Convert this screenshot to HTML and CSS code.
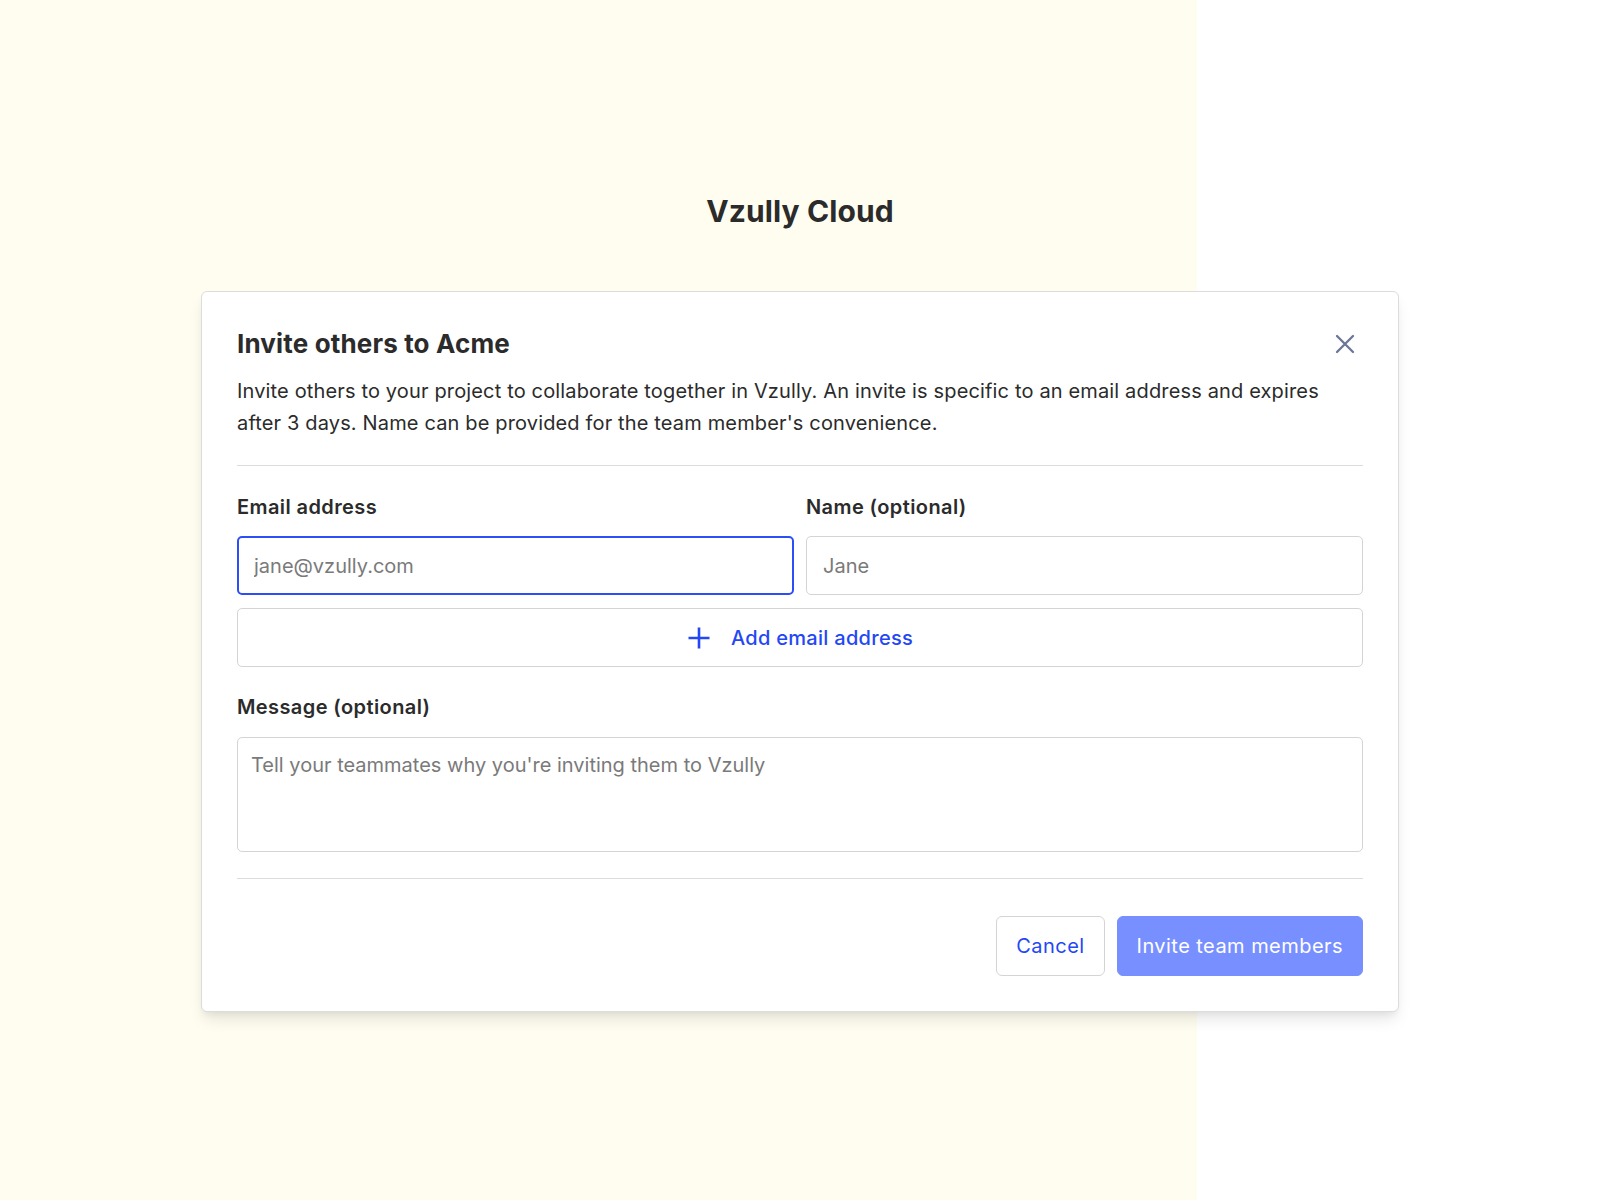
FILE: index.html
```html
<!DOCTYPE html>
<html>

<head>
    <meta name="viewport" content="width=device-width, initial-scale=1">
    <link rel="stylesheet" href="styles.css">
</head>

<body>

    <h1 class="brand">Vzully Cloud</h1>

    <div class="modal">
        <div class="modal-head">
            <h2 class="modal-title">Invite others to Acme</h2>
            <button class="close" type="button" aria-label="Close">
                <svg width="20" height="20" viewBox="0 0 20 20">
                    <path d="M2 2 L18 18 M18 2 L2 18" stroke="currentColor" stroke-width="2.3" stroke-linecap="round" fill="none" />
                </svg>
            </button>
        </div>
        <p class="modal-text">Invite others to your project to collaborate together in Vzully. An invite is specific to an email address and expires after 3 days. Name can be provided for the team member's convenience.</p>

        <hr class="rule">

        <div class="fields">
            <div class="field">
                <label class="label" for="email">Email address</label>
                <input class="input focused" id="email" type="text" placeholder="jane@vzully.com">
            </div>
            <div class="field">
                <label class="label" for="name">Name (optional)</label>
                <input class="input" id="name" type="text" placeholder="Jane">
            </div>
        </div>

        <button class="add-row" type="button">
            <svg width="24" height="24" viewBox="0 0 24 24">
                <path d="M12 1.5 V22.5 M1.5 12 H22.5" stroke="currentColor" stroke-width="2.6" fill="none" />
            </svg>
            <span>Add email address</span>
        </button>

        <label class="label label-msg" for="msg">Message (optional)</label>
        <textarea class="textarea" id="msg" placeholder="Tell your teammates why you're inviting them to Vzully"></textarea>

        <hr class="rule rule-bottom">

        <div class="actions">
            <button class="btn btn-cancel" type="button">Cancel</button>
            <button class="btn btn-invite" type="button">Invite team members</button>
        </div>
    </div>

</body>

</html>
```

FILE: styles.css
```css
body {
    margin: 0;
    padding-top: 191px;
    min-height: 1200px;
    box-sizing: border-box;
    font-family: Inter, "Noto Sans", sans-serif;
    color: #2b2b2b;
    /* left pane is cream, the rest stays white */
    background: linear-gradient(to right, #fffdf0 1197px, #ffffff 1197px);
}

.brand {
    margin: 0;
    text-align: center;
    font-size: 30px;
    line-height: 40px;
    font-weight: 700;
    letter-spacing: 0.1px;
}

.modal {
    width: 1198px;
    box-sizing: border-box;
    margin: 60px auto 0;
    padding: 36px 35px 35px;
    background: #fff;
    border: 1px solid #dcdcdc;
    border-radius: 6px;
    box-shadow: 0 10px 15px -3px rgba(0, 0, 0, 0.1), 0 4px 6px -2px rgba(0, 0, 0, 0.05);
}

.modal-head {
    display: flex;
    align-items: center;
    justify-content: space-between;
}

.modal-title {
    margin: 0;
    font-size: 26px;
    line-height: 32px;
    font-weight: 700;
    letter-spacing: 0.15px;
}

.close {
    border: 0;
    background: none;
    padding: 0;
    margin-right: 8px;
    color: #6b7596;
    cursor: pointer;
    display: flex;
}

.modal-text {
    margin: 15px 0 0;
    font-size: 20px;
    line-height: 32px;
    letter-spacing: 0.15px;
}

.rule {
    margin: 26px 0 0;
    border: 0;
    border-top: 1px solid #dcdcdc;
}

.fields {
    margin-top: 27px;
    display: grid;
    grid-template-columns: 1fr 1fr;
    gap: 12px;
}

.field {
    display: flex;
    flex-direction: column;
}

.label {
    display: block;
    font-size: 20px;
    line-height: 28px;
    font-weight: 600;
    letter-spacing: 0.4px;
    margin-bottom: 15px;
}

.input,
.textarea {
    box-sizing: border-box;
    width: 100%;
    font-family: inherit;
    font-size: 20px;
    color: #2b2b2b;
    border: 1px solid #d4d4d4;
    border-radius: 5px;
    background: #fff;
    outline: none;
}

.input {
    height: 59px;
    padding: 0 16px;
}

.input.focused {
    border: 2px solid #2d4ef5;
    padding: 0 15px;
}

.input::placeholder,
.textarea::placeholder {
    color: #7a7a7a;
}

.add-row {
    margin-top: 13px;
    width: 100%;
    height: 59px;
    display: flex;
    align-items: center;
    justify-content: center;
    gap: 20px;
    background: #fff;
    border: 1px solid #d4d4d4;
    border-radius: 5px;
    color: #2447f5;
    font-family: inherit;
    font-size: 20px;
    font-weight: 500;
    letter-spacing: 0.3px;
    cursor: pointer;
}

.label-msg {
    margin-top: 26px;
    margin-bottom: 16px;
}

.textarea {
    display: block;
    height: 115px;
    padding: 12px 13px;
    line-height: 30px;
    resize: none;
}

.rule-bottom {
    margin-top: 26px;
}

.actions {
    margin-top: 37px;
    display: flex;
    justify-content: flex-end;
    gap: 12px;
}

.btn {
    height: 60px;
    padding: 0 19px;
    font-family: inherit;
    font-size: 20px;
    font-weight: 400;
    letter-spacing: 0.45px;
    border-radius: 6px;
    cursor: pointer;
}

.btn-cancel {
    background: #fff;
    border: 1px solid #d4d4d4;
    color: #2447f5;
}

.btn-invite {
    background: #7890ff;
    border: 1px solid #7890ff;
    color: #fff;
}
```
